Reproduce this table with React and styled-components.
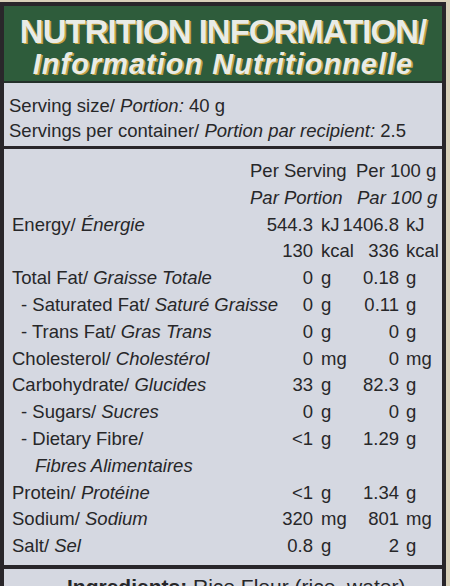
import React from "react";
import styled, { createGlobalStyle } from "styled-components";

const GlobalStyle = createGlobalStyle`
  html, body {
    margin: 0;
    padding: 0;
    background: #d9d1ba;
    overflow: hidden;
  }
  body {
    font-family: "Liberation Sans", Arial, sans-serif;
  }
`;

const Label = styled.div`
  box-sizing: border-box;
  width: 446px;
  margin-top: 2px;
  border: 4px solid #29262a;
  border-bottom: none;
  background: #d5d8e1;
  color: #272729;
  height: 600px;
`;

const Header = styled.header`
  box-sizing: border-box;
  height: 77px;
  padding-top: 10px;
  background: #2e5c3b;
  border-bottom: 2px solid #24302a;
  text-align: center;
  color: #e9ebe6;
  text-shadow: 1.5px 1px 0 #c4a244;
`;

const Title = styled.div`
  font-size: 33px;
  font-weight: 700;
  letter-spacing: -1px;
  line-height: 31px;
  white-space: nowrap;
`;

const Subtitle = styled.div`
  margin-top: 1.5px;
  font-size: 29px;
  font-weight: 700;
  font-style: italic;
  letter-spacing: 1px;
  line-height: 31px;
  white-space: nowrap;
`;

const Serving = styled.section`
  padding: 10px 0 3px 5px;
  border-bottom: 3px solid #29262a;
  font-size: 18.5px;
  line-height: 25px;
`;

const Line = styled.div`
  white-space: nowrap;
`;

const Fr = styled.i`
  font-style: italic;
`;

const Table = styled.section`
  display: grid;
  grid-template-columns: 238px 63px 40px 46px 1fr;
  padding: 9px 0 5px 8px;
  border-bottom: 4px solid #29262a;
  font-size: 18.5px;
  line-height: 26.8px;
`;

const Name = styled.div`
  grid-column: 1;
  white-space: nowrap;
  padding-left: ${(p) => p.$indent || 0}px;
`;

const Head = styled.div`
  grid-column: span 2;
  white-space: nowrap;
  padding-left: ${(p) => p.$pad || 0}px;
  font-style: ${(p) => (p.$italic ? "italic" : "normal")};
`;

const Num = styled.div`
  justify-self: end;
  white-space: nowrap;
`;

const Unit = styled.div`
  padding-left: ${(p) => p.$pad}px;
  white-space: nowrap;
`;

const Ingredients = styled.section`
  padding: 5px 0 0 63px;
  font-size: 21px;
  line-height: 26px;
  white-space: nowrap;
`;

const rows = [
  { en: "Energy/ ", fr: "Énergie", a: ["544.3", "kJ"], b: ["1406.8", "kJ"] },
  { en: "", fr: "", a: ["130", "kcal"], b: ["336", "kcal"] },
  { en: "Total Fat/ ", fr: "Graisse Totale", a: ["0", "g"], b: ["0.18", "g"] },
  { en: "- Saturated Fat/ ", fr: "Saturé Graisse", a: ["0", "g"], b: ["0.11", "g"], indent: 9 },
  { en: "- Trans Fat/ ", fr: "Gras Trans", a: ["0", "g"], b: ["0", "g"], indent: 9 },
  { en: "Cholesterol/ ", fr: "Cholestérol", a: ["0", "mg"], b: ["0", "mg"] },
  { en: "Carbohydrate/ ", fr: "Glucides", a: ["33", "g"], b: ["82.3", "g"] },
  { en: "- Sugars/ ", fr: "Sucres", a: ["0", "g"], b: ["0", "g"], indent: 9 },
  { en: "- Dietary Fibre/", fr: "", a: ["<1", "g"], b: ["1.29", "g"], indent: 9 },
  { en: "", fr: "Fibres Alimentaires", a: ["", ""], b: ["", ""], indent: 23 },
  { en: "Protein/ ", fr: "Protéine", a: ["<1", "g"], b: ["1.34", "g"] },
  { en: "Sodium/ ", fr: "Sodium", a: ["320", "mg"], b: ["801", "mg"] },
  { en: "Salt/ ", fr: "Sel", a: ["0.8", "g"], b: ["2", "g"] },
];

export default function App() {
  return (
    <>
      <GlobalStyle />
      <Label>
        <Header>
          <Title>NUTRITION INFORMATION/</Title>
          <Subtitle>Information Nutritionnelle</Subtitle>
        </Header>
        <Serving>
          <Line>
            Serving size/ <Fr>Portion:</Fr> 40 g
          </Line>
          <Line>
            Servings per container/ <Fr>Portion par recipient:</Fr> 2.5
          </Line>
        </Serving>
        <Table>
          <Name />
          <Head>Per Serving</Head>
          <Head $pad={3}>Per 100 g</Head>
          <Name />
          <Head $italic>Par Portion</Head>
          <Head $italic $pad={4}>Par 100 g</Head>
          {rows.map((r, i) => (
            <React.Fragment key={i}>
              <Name $indent={r.indent}>
                {r.en}
                {r.fr && <Fr>{r.fr}</Fr>}
              </Name>
              <Num>{r.a[0]}</Num>
              <Unit $pad={8}>{r.a[1]}</Unit>
              <Num>{r.b[0]}</Num>
              <Unit $pad={7}>{r.b[1]}</Unit>
            </React.Fragment>
          ))}
        </Table>
        <Ingredients>
          <b>Ingredients:</b> Rice Flour (rice, water)
        </Ingredients>
      </Label>
    </>
  );
}
